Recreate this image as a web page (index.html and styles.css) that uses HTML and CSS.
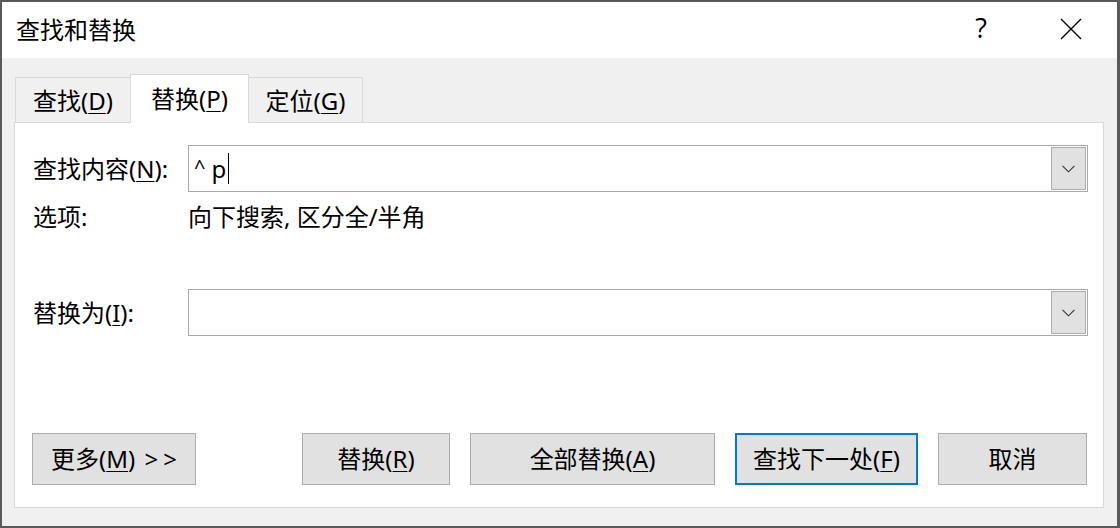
FILE: index.html
```html
<!DOCTYPE html>
<html lang="zh-CN">
<head>
<meta charset="utf-8">
<title>查找和替换</title>
<link rel="stylesheet" href="styles.css">
</head>
<body>
<div class="window">
  <div class="titlebar">
    <span class="title">查找和替换</span>
    <span class="help">?</span>
    <span class="close">
      <svg width="22" height="22" viewBox="0 0 22 22"><path d="M1 1 L21 21 M21 1 L1 21" stroke="#000" stroke-width="1.4" fill="none"/></svg>
    </span>
  </div>
  <div class="content">
    <div class="tabs">
      <div class="tab">查找(<u>D</u>)</div>
      <div class="tab active">替换(<u>P</u>)</div>
      <div class="tab">定位(<u>G</u>)</div>
    </div>
    <div class="panel">
      <div class="row">
        <span class="label">查找内容(<u>N</u>):</span>
        <div class="combo">
          <span class="value"><span class="hat">^</span>p<span class="caret"></span></span>
          <span class="drop"><svg width="13" height="8" viewBox="0 0 13 8"><path d="M0.5 0.8 L6.5 6.8 L12.5 0.8" stroke="#333" stroke-width="1.1" fill="none"/></svg></span>
        </div>
      </div>
      <div class="row options">
        <span class="label">选项:</span>
        <span class="opt-text">向下搜索, 区分全/半角</span>
      </div>
      <div class="row replace">
        <span class="label">替换为(<u>I</u>):</span>
        <div class="combo">
          <span class="value"></span>
          <span class="drop"><svg width="13" height="8" viewBox="0 0 13 8"><path d="M0.5 0.8 L6.5 6.8 L12.5 0.8" stroke="#333" stroke-width="1.1" fill="none"/></svg></span>
        </div>
      </div>
      <div class="buttons">
        <button class="btn btn-more">更多(<u>M</u>)&nbsp;<span class="arrows">&gt;&gt;</span></button>
        <button class="btn btn-replace">替换(<u>R</u>)</button>
        <button class="btn btn-all">全部替换(<u>A</u>)</button>
        <button class="btn btn-next focused">查找下一处(<u>F</u>)</button>
        <button class="btn btn-cancel">取消</button>
      </div>
    </div>
  </div>
</div>
</body>
</html>
```
FILE: styles.css
```css
* { box-sizing: border-box; }

body {
  margin: 0;
  padding: 2px 3px 2px 2px;
  background: #5a5a5a;
  font-family: "Noto Sans", "Noto Sans CJK SC", sans-serif;
  color: #000;
}

.window {
  width: 1115px;
  height: 524px;
  background: #f0f0f0;
  display: flex;
  flex-direction: column;
}

.titlebar {
  height: 56px;
  background: #fff;
  display: flex;
  align-items: center;
  padding-left: 14px;
}

.title {
  font-size: 24px;
  line-height: 28px;
  flex: 1;
}

.help {
  width: 60px;
  text-align: center;
  font-size: 27px;
  line-height: 30px;
  font-family: "Open Sans", "Noto Sans", sans-serif;
  margin-top: -4px;
}

.close {
  width: 60px;
  margin-left: 30px;
  margin-right: 16px;
  display: flex;
  justify-content: center;
  align-items: center;
  margin-top: -2px;
}

.content {
  flex: 1;
  display: flex;
  flex-direction: column;
  padding: 16px 13px 18px 12px;
}

.tabs {
  display: flex;
  align-items: flex-end;
  height: 48px;
  margin-left: 1px;
}

.tab {
  height: 45px;
  border: 1px solid #d9d9d9;
  border-bottom: none;
  background: #f0f0f0;
  display: flex;
  align-items: center;
  justify-content: center;
  font-size: 24px;
  line-height: 28px;
  padding-top: 1px;
}

.tab:nth-child(1) { width: 116px; }
.tab:nth-child(2) { width: 119px; margin-left: -1px; }
.tab:nth-child(3) { width: 115px; margin-left: -1px; }

.tab.active {
  height: 49px;
  margin-bottom: -1px;
  background: #fff;
  position: relative;
  z-index: 1;
  padding-bottom: 2px;
}

.panel {
  flex: 1;
  background: #fff;
  border: 1px solid #d9d9d9;
  padding: 22px 15px 0 18px;
}

.row {
  display: flex;
  align-items: center;
  height: 47px;
}

.label {
  width: 155px;
  font-size: 24px;
  line-height: 28px;
  white-space: nowrap;
}

.combo {
  width: 900px;
  height: 47px;
  border: 1px solid #a9a9a9;
  padding: 1px;
  display: flex;
  background: #fff;
}

.value {
  flex: 1;
  display: flex;
  align-items: center;
  padding-left: 4px;
  font-size: 24px;
  line-height: 28px;
}

.hat {
  font-size: 20px;
  margin-right: 6px;
  align-self: center;
  margin-top: -4px;
}

.caret {
  display: inline-block;
  width: 1px;
  height: 31px;
  background: #000;
  margin-left: 2px;
}

.drop {
  width: 35px;
  border: 1px solid #adadad;
  background: #e1e1e1;
  display: flex;
  align-items: center;
  justify-content: center;
}

.options {
  height: 30px;
  margin-top: 10px;
}

.opt-text {
  font-size: 24px;
  line-height: 28px;
  white-space: nowrap;
}

.replace {
  margin-top: 57px;
}

.buttons {
  display: flex;
  margin-top: 97px;
  margin-left: -1px;
  gap: 20px;
}

.btn {
  height: 52px;
  border: 1px solid #adadad;
  background: #e1e1e1;
  font-family: inherit;
  font-size: 24px;
  line-height: 28px;
  color: #000;
  padding: 0;
  display: flex;
  align-items: center;
  justify-content: center;
}

.arrows {
  letter-spacing: 5px;
  margin-left: 3px;
  margin-right: -5px;
}

.btn-more { width: 164px; margin-right: 86px; }
.btn-replace { width: 148px; }
.btn-all { width: 245px; }
.btn-next { width: 183px; }
.btn-cancel { width: 149px; }

.btn.focused {
  border: 2px solid #0078d7;
}

u {
  text-decoration-thickness: 1px;
  text-underline-offset: 3px;
}
```
